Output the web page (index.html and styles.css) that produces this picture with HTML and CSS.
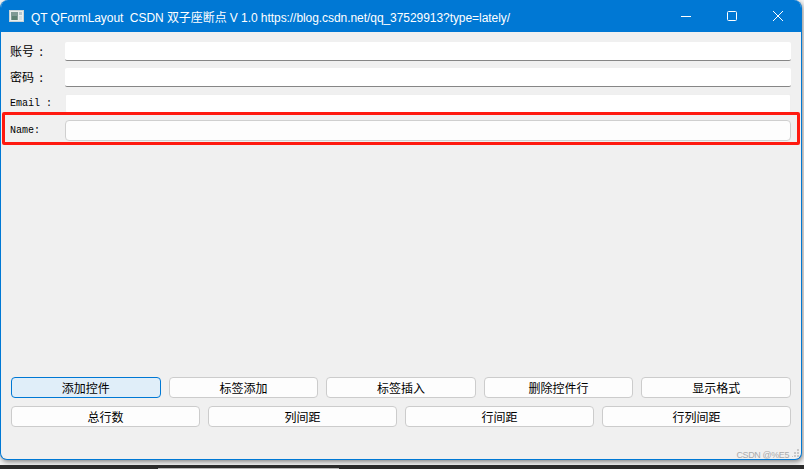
FILE: index.html
```html
<!DOCTYPE html>
<html lang="zh">
<head>
<meta charset="utf-8">
<title>QT QFormLayout</title>
<link rel="stylesheet" href="styles.css">
</head>
<body>
<div class="window">
  <header class="titlebar">
    <svg class="app-icon" width="15" height="12" viewBox="0 0 15 12"><rect width="15" height="12" fill="#c9d3d6"/><rect x="1" y="1" width="13" height="10" fill="#e9eeee"/><rect x="2" y="2" width="7" height="8" fill="#7f9a95"/><rect x="3" y="6" width="5" height="4" fill="#5d8274"/><rect x="10" y="2" width="3" height="3" fill="#b5c6cc"/><rect x="10" y="6" width="3" height="4" fill="#d3dee1"/></svg>
    <span class="title">QT QFormLayout&nbsp; CSDN 双子座断点 V 1.0 https://blog.csdn.net/qq_37529913?type=lately/</span>
    <div class="controls">
      <svg class="ctl" width="46" height="32" viewBox="0 0 46 32"><path d="M18 16.5h10" stroke="#fff" fill="none"/></svg>
      <svg class="ctl" width="46" height="32" viewBox="0 0 46 32"><rect x="18.5" y="11.5" width="9" height="9" rx="1" stroke="#fff" fill="none"/></svg>
      <svg class="ctl" width="46" height="32" viewBox="0 0 46 32"><path d="M18 11l10 10M28 11l-10 10" stroke="#fff" fill="none"/></svg>
    </div>
  </header>
  <main class="body">
    <form class="form">
      <div class="row"><label class="label cjk">账号  :</label><div class="input line"></div></div>
      <div class="row"><label class="label cjk">密码  :</label><div class="input line"></div></div>
      <div class="row"><label class="label mono">Email :</label><div class="input plain"></div></div>
      <div class="row active"><label class="label mono">Name:</label><div class="input boxed"></div></div>
    </form>
    <div class="buttons">
      <div class="btn-row">
        <button class="btn primary" type="button">添加控件</button>
        <button class="btn" type="button">标签添加</button>
        <button class="btn" type="button">标签插入</button>
        <button class="btn" type="button">删除控件行</button>
        <button class="btn" type="button">显示格式</button>
      </div>
      <div class="btn-row">
        <button class="btn" type="button">总行数</button>
        <button class="btn" type="button">列间距</button>
        <button class="btn" type="button">行间距</button>
        <button class="btn" type="button">行列间距</button>
      </div>
    </div>
    <div class="watermark">
      <span class="wm-text">CSDN @%E5</span>
      <svg class="wm-dots" width="7" height="9" viewBox="0 0 7 9"><path d="M5 0h2v2H5zM5 3h2v2H5zM2 3h2v2H2zM5 6h2v2H5zM2 6h2v2H2zM0 7h1v1H0z" fill="#c8c8c8"/></svg>
    </div>
  </main>
</div>
<div class="taskbar"><div class="task-strip"></div></div>
</body>
</html>
```
FILE: styles.css
```css
* { box-sizing: border-box; }
html, body { margin: 0; padding: 0; }
body {
  width: 804px;
  height: 469px;
  overflow: hidden;
  background: #f4f4f4;
  font-family: "Noto Sans CJK SC", "Liberation Sans", sans-serif;
  display: flex;
  flex-direction: column;
}
.window {
  width: 802px;
  height: 460px;
  flex: none;
  display: flex;
  flex-direction: column;
  border-radius: 8px 8px 7px 7px;
  border: 1px solid #0078d4;
  border-top: 0;
  background: #f0f0f0;
  box-shadow: 1px 2px 5px rgba(0, 0, 0, 0.45);
  overflow: hidden;
}
.titlebar {
  height: 32px;
  flex: none;
  background: #0078d4;
  color: #fff;
  display: flex;
  align-items: center;
  padding-left: 8px;
}
.app-icon { flex: none; margin-right: 7px; }
.title {
  font-family: "Liberation Sans", "Noto Sans CJK SC", sans-serif;
  font-size: 12px;
  letter-spacing: -0.06px;
  white-space: nowrap;
  flex: 1;
}
.controls { display: flex; flex: none; }
.ctl { display: block; }
.body {
  flex: 1;
  display: flex;
  flex-direction: column;
  justify-content: space-between;
  padding: 10px 11px 32px 8px;
  position: relative;
}
.form { display: flex; flex-direction: column; gap: 7px; margin-right: -1px; }
.row { display: flex; align-items: center; height: 19px; }
.row.active {
  flex: none;
  height: 33px;
  margin: -8px -9px 0 -7px;
  border: 3px solid #ff1a10;
  border-radius: 2px;
  padding: 4px 6px 0 4px;
}
.label { width: 56px; padding-left: 1px; flex: none; color: #000; white-space: pre; }
.cjk { font-size: 12px; font-family: "Noto Sans CJK SC", sans-serif; padding-bottom: 2px; }
.mono { font-size: 10px; font-family: "Liberation Mono", monospace; }
.input { flex: 1; height: 19px; background: #fff; border-radius: 2px; }
.line { border-bottom: 1px solid #868686; }
.plain { border: 1px solid #efefef; }
.boxed { height: 21px; border: 1px solid #cfcfcf; border-radius: 4px; background: #fdfdfd; }
.buttons { display: flex; flex-direction: column; gap: 8px; padding-left: 2px; margin-right: -1px; }
.btn-row { display: flex; gap: 8px; }
.btn {
  flex: 1 1 0;
  height: 21px;
  padding: 0;
  background: #fdfdfd;
  border: 1px solid #cccccc;
  border-radius: 4px;
  font-family: "Noto Sans CJK SC", sans-serif;
  font-size: 12px;
  color: #000;
}
.btn.primary { background: #e0eef9; border-color: #0078d4; }
.watermark {
  position: absolute;
  right: 2px;
  bottom: -1px;
  display: flex;
  align-items: flex-end;
  gap: 3px;
  font: 9px "Liberation Sans", sans-serif;
  color: #aaaaaa;
}
.wm-text { letter-spacing: -0.4px; }
.wm-dots { display: block; margin-bottom: 2px; }
.taskbar {
  height: 4px;
  flex: none;
  margin-top: 5px;
  padding-left: 158px;
  display: flex;
  align-items: flex-end;
  background: #2b2b2b;
}
.task-strip { width: 181px; height: 1px; background: #b5b5b5; }
```
